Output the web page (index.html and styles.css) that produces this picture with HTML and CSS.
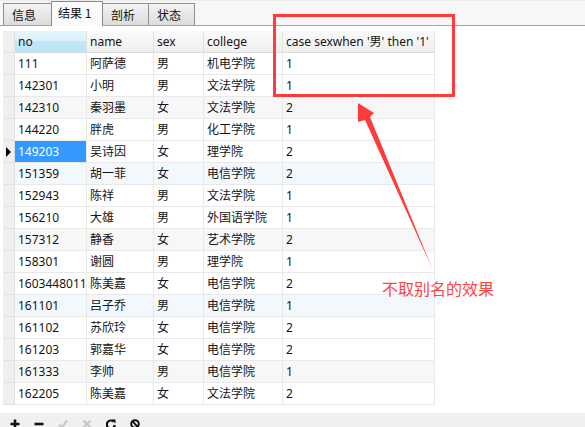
FILE: index.html
```html
<!DOCTYPE html>
<html lang="zh-CN">
<head>
    <meta charset="UTF-8">
    <title>结果 1</title>
    <link rel="stylesheet" href="styles.css">
</head>
<body>
    <div class="tabs">
        <div class="tab tab-info">信息</div>
        <div class="tab active">结果 1</div>
        <div class="tab">剖析</div>
        <div class="tab">状态</div>
    </div>

    <div class="content">
        <div class="grid">
            <div class="row head">
                <div class="ind"></div>
                <div class="cell sel-head">no</div>
                <div class="cell">name</div>
                <div class="cell">sex</div>
                <div class="cell">college</div>
                <div class="cell">case sexwhen '男' then '1'</div>
            </div>
            <div class="row"><div class="ind"></div><div class="cell">111</div><div class="cell">阿萨德</div><div class="cell">男</div><div class="cell">机电学院</div><div class="cell">1</div></div>
            <div class="row"><div class="ind"></div><div class="cell">142301</div><div class="cell">小明</div><div class="cell">男</div><div class="cell">文法学院</div><div class="cell">1</div></div>
            <div class="row gray"><div class="ind"></div><div class="cell">142310</div><div class="cell">秦羽墨</div><div class="cell">女</div><div class="cell">文法学院</div><div class="cell">2</div></div>
            <div class="row"><div class="ind"></div><div class="cell">144220</div><div class="cell">胖虎</div><div class="cell">男</div><div class="cell">化工学院</div><div class="cell">1</div></div>
            <div class="row"><div class="ind current"><span class="arrow"></span></div><div class="cell selected">149203</div><div class="cell">吴诗因</div><div class="cell">女</div><div class="cell">理学院</div><div class="cell">2</div></div>
            <div class="row blue"><div class="ind"></div><div class="cell">151359</div><div class="cell">胡一菲</div><div class="cell">女</div><div class="cell">电信学院</div><div class="cell">2</div></div>
            <div class="row"><div class="ind"></div><div class="cell">152943</div><div class="cell">陈祥</div><div class="cell">男</div><div class="cell">文法学院</div><div class="cell">1</div></div>
            <div class="row"><div class="ind"></div><div class="cell">156210</div><div class="cell">大雄</div><div class="cell">男</div><div class="cell">外国语学院</div><div class="cell">1</div></div>
            <div class="row gray"><div class="ind"></div><div class="cell">157312</div><div class="cell">静香</div><div class="cell">女</div><div class="cell">艺术学院</div><div class="cell">2</div></div>
            <div class="row"><div class="ind"></div><div class="cell">158301</div><div class="cell">谢圆</div><div class="cell">男</div><div class="cell">理学院</div><div class="cell">1</div></div>
            <div class="row"><div class="ind"></div><div class="cell">1603448011</div><div class="cell">陈美嘉</div><div class="cell">女</div><div class="cell">电信学院</div><div class="cell">2</div></div>
            <div class="row blue"><div class="ind"></div><div class="cell">161101</div><div class="cell">吕子乔</div><div class="cell">男</div><div class="cell">电信学院</div><div class="cell">1</div></div>
            <div class="row"><div class="ind"></div><div class="cell">161102</div><div class="cell">苏欣玲</div><div class="cell">女</div><div class="cell">电信学院</div><div class="cell">2</div></div>
            <div class="row"><div class="ind"></div><div class="cell">161203</div><div class="cell">郭嘉华</div><div class="cell">女</div><div class="cell">电信学院</div><div class="cell">2</div></div>
            <div class="row gray"><div class="ind"></div><div class="cell">161333</div><div class="cell">李帅</div><div class="cell">男</div><div class="cell">电信学院</div><div class="cell">1</div></div>
            <div class="row"><div class="ind"></div><div class="cell">162205</div><div class="cell">陈美嘉</div><div class="cell">女</div><div class="cell">文法学院</div><div class="cell">2</div></div>
        </div>
    </div>

    <div class="toolbar">
        <svg class="tool" viewBox="0 0 10 10"><path d="M5 0.5v9M0.5 5h9" stroke="#111" stroke-width="2.6"/></svg>
        <svg class="tool" viewBox="0 0 10 10"><path d="M0.5 5h9" stroke="#111" stroke-width="2.6"/></svg>
        <svg class="tool" viewBox="0 0 10 10"><path d="M1 5.5l2.8 3L9 1.5" stroke="#c8c8c8" stroke-width="2.2" fill="none"/></svg>
        <svg class="tool" viewBox="0 0 10 10"><path d="M1.5 1.5l7 7M8.5 1.5l-7 7" stroke="#c8c8c8" stroke-width="2.4"/></svg>
        <svg class="tool" viewBox="0 0 10 10"><path d="M7.6 2.6A4 4 0 1 0 8.8 6" stroke="#111" stroke-width="2.2" fill="none"/><path d="M5.5 0.5h4v4z" fill="#111"/></svg>
        <svg class="tool" viewBox="0 0 10 10"><circle cx="5" cy="5" r="3.8" stroke="#111" stroke-width="2" fill="none"/><path d="M2.4 2.4l5.2 5.2" stroke="#111" stroke-width="2"/></svg>
    </div>

    <!-- 标注 -->
    <svg class="annot" width="585" height="427" viewBox="0 0 585 427">
        <rect x="274.5" y="15.5" width="179" height="80" fill="none" stroke="#ff3b3b" stroke-width="3"/>
        <polygon points="358,103 374,113 370,117 432,268 365,120 358,122" fill="#ff3b3b"/>
    </svg>
    <div class="note">不取别名的效果</div>
</body>
</html>
```

FILE: styles.css
```css
body {
    margin: 0;
    width: 585px;
    height: 427px;
    overflow: hidden;
    position: relative;
    background: #fff;
    font-family: "Noto Sans", "Noto Sans CJK SC", sans-serif;
    font-size: 12px;
    color: #151515;
}

.tabs {
    display: flex;
    align-items: flex-end;
    height: 26px;
    padding-left: 3px;
    background: #f7f7f7;
    border-top: 1px solid #ececec;
    border-bottom: 1px solid #a3a3a3;
    box-sizing: border-box;
}
.tab {
    height: 22px;
    box-sizing: border-box;
    border: 1px solid #8f8f8f;
    border-bottom: none;
    margin-left: -1px;
    width: 47px;
    padding-left: 8px;
    line-height: 22px;
    font-family: "Noto Sans CJK SC", sans-serif;
    font-size: 12px;
    background: linear-gradient(#f3f3f3, #dcdcdc);
    color: #111;
}
.tab-info {
    margin-left: 0;
    width: 49px;
}
.tab.active {
    height: 25px;
    width: 52px;
    margin-bottom: -1px;
    padding-left: 6px;
    background: #fafafa;
    border-color: #8a8a8a;
    position: relative;
    z-index: 1;
}

.content {
    padding: 5px 0 0 3px;
    height: 387px;
    box-sizing: border-box;
    background: #fff;
}

.row {
    display: grid;
    grid-template-columns: 12px 72px 67px 50px 79px 152px;
    height: 22px;
}
.cell {
    box-sizing: border-box;
    border-right: 1px solid #e9e9e9;
    border-bottom: 1px solid #e9e9e9;
    padding-left: 3px;
    line-height: 21px;
    white-space: nowrap;
    overflow: hidden;
}
.ind {
    box-sizing: border-box;
    background: #efefef;
    border-bottom: 1px solid #e2e2e2;
    border-right: 1px solid #e0e0e0;
    position: relative;
}
.head .cell {
    background: linear-gradient(#fafafa, #efefef);
    border-right: 1px solid #e2e2e2;
    border-bottom: 1px solid #dadada;
}
.head .sel-head {
    background: linear-gradient(#e5f6fd 0%, #dbf1fb 50%, #c2e8f8 50%, #b9e4f7 100%);
}
.gray .cell {
    background: #f7f7f7;
}
.blue .cell {
    background: #f3f8fd;
}
.cell.selected {
    background: #3399ff;
    color: #fff;
}
.arrow {
    position: absolute;
    left: 3px;
    top: 6px;
    border-left: 5px solid #000;
    border-top: 5px solid transparent;
    border-bottom: 5px solid transparent;
}

.toolbar {
    height: 14px;
    background: #f0f0f0;
    display: flex;
    gap: 14px;
    padding: 6px 0 0 10px;
    box-sizing: border-box;
    overflow: hidden;
}
.tool {
    width: 10px;
    height: 10px;
    flex: none;
}

.annot {
    position: absolute;
    left: 0;
    top: 0;
    pointer-events: none;
}
.note {
    position: absolute;
    left: 382px;
    top: 277px;
    font-family: "Noto Sans CJK SC", sans-serif;
    font-size: 16px;
    color: #ff4545;
    line-height: 22px;
}
```
